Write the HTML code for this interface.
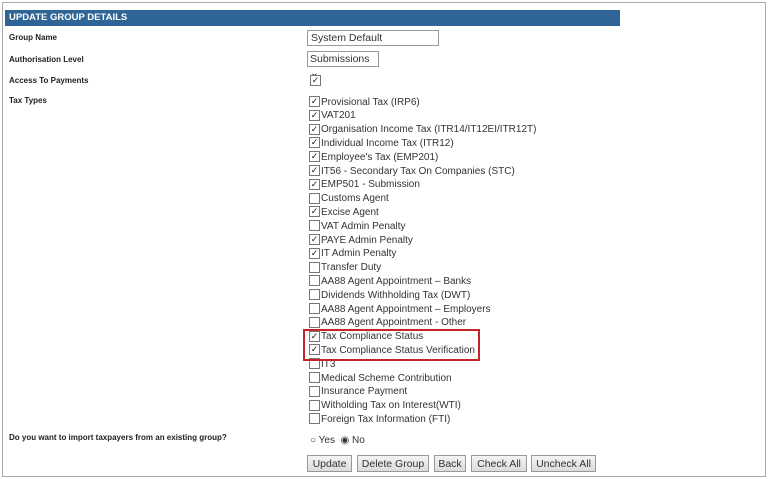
<!DOCTYPE html>
<html><head><style>
body{margin:0;width:768px;height:479px;background:#fff;position:relative;overflow:hidden;font-family:"Liberation Sans",Arial,sans-serif;}
.frame{position:absolute;left:2px;top:2px;width:762px;height:473px;border:1px solid #aaa;}
.hdr{position:absolute;left:5px;top:10px;width:615px;height:16px;background:#2f6596;color:#fff;font-weight:bold;font-size:9.5px;line-height:16px;padding-left:4px;box-sizing:border-box;}
.lbl{position:absolute;left:9px;font-size:8px;font-weight:bold;color:#222;}
.it{position:absolute;left:321px;font-size:10px;color:#333;white-space:nowrap;height:13px;line-height:13px;}
.cb{position:absolute;left:309px;width:9px;height:9px;border:1px solid #777;font-size:9px;line-height:9px;text-align:center;color:#222;background:#fff;overflow:hidden;}
.btn{position:absolute;top:455px;height:17px;border:1px solid #999;background:linear-gradient(#f4f4f4,#dcdcdc);font-size:10.5px;line-height:17px;text-align:center;color:#333;box-sizing:border-box;}
</style></head><body>
<div class="frame"></div>
<div class="hdr">UPDATE GROUP DETAILS</div>
<div class="lbl" style="top:33px">Group Name</div>
<div class="lbl" style="top:55px">Authorisation Level</div>
<div class="lbl" style="top:76px">Access To Payments</div>
<div class="lbl" style="top:96px">Tax Types</div>
<div class="lbl" style="top:433px">Do you want to import taxpayers from an existing group?</div>
<div style="position:absolute;left:307px;top:30px;width:132px;height:16px;border:1px solid #999;box-sizing:border-box;font-size:10.5px;line-height:14px;padding-left:3px;color:#333">System Default</div>
<div style="position:absolute;left:307px;top:51px;width:72px;height:16px;border:1px solid #999;box-sizing:border-box;font-size:10.5px;line-height:14px;padding-left:2px;color:#333">Submissions &#8964;</div>
<div class="cb" style="left:310px;top:75px">✓</div>
<div id="list"></div>
<div style="position:absolute;left:303px;top:329px;width:177px;height:32px;border:2px solid #c4242c;box-sizing:border-box"></div>
<div class="it" style="top:434px;left:310px">○ Yes &nbsp;◉ No</div>
<div class="btn" style="left:307px;width:45px">Update</div>
<div class="btn" style="left:357px;width:72px">Delete Group</div>
<div class="btn" style="left:434px;width:32px">Back</div>
<div class="btn" style="left:471px;width:56px">Check All</div>
<div class="btn" style="left:531px;width:65px">Uncheck All</div>
<script>
var items=[["Provisional Tax (IRP6)",1],["VAT201",1],["Organisation Income Tax (ITR14/IT12EI/ITR12T)",1],["Individual Income Tax (ITR12)",1],["Employee's Tax (EMP201)",1],["IT56 - Secondary Tax On Companies (STC)",1],["EMP501 - Submission",1],["Customs Agent",0],["Excise Agent",1],["VAT Admin Penalty",0],["PAYE Admin Penalty",1],["IT Admin Penalty",1],["Transfer Duty",0],["AA88 Agent Appointment – Banks",0],["Dividends Withholding Tax (DWT)",0],["AA88 Agent Appointment – Employers",0],["AA88 Agent Appointment - Other",0],["Tax Compliance Status",1],["Tax Compliance Status Verification",1],["IT3",0],["Medical Scheme Contribution",0],["Insurance Payment",0],["Witholding Tax on Interest(WTI)",0],["Foreign Tax Information (FTI)",0]];
var h="";items.forEach(function(a,i){var t=95.5+i*13.8;h+='<div class="cb" style="top:'+(t+0.5).toFixed(1)+'px">'+(a[1]?'✓':'')+'</div><div class="it" style="top:'+t.toFixed(1)+'px">'+a[0]+'</div>';});
document.getElementById("list").innerHTML=h;
</script>
</body></html>
